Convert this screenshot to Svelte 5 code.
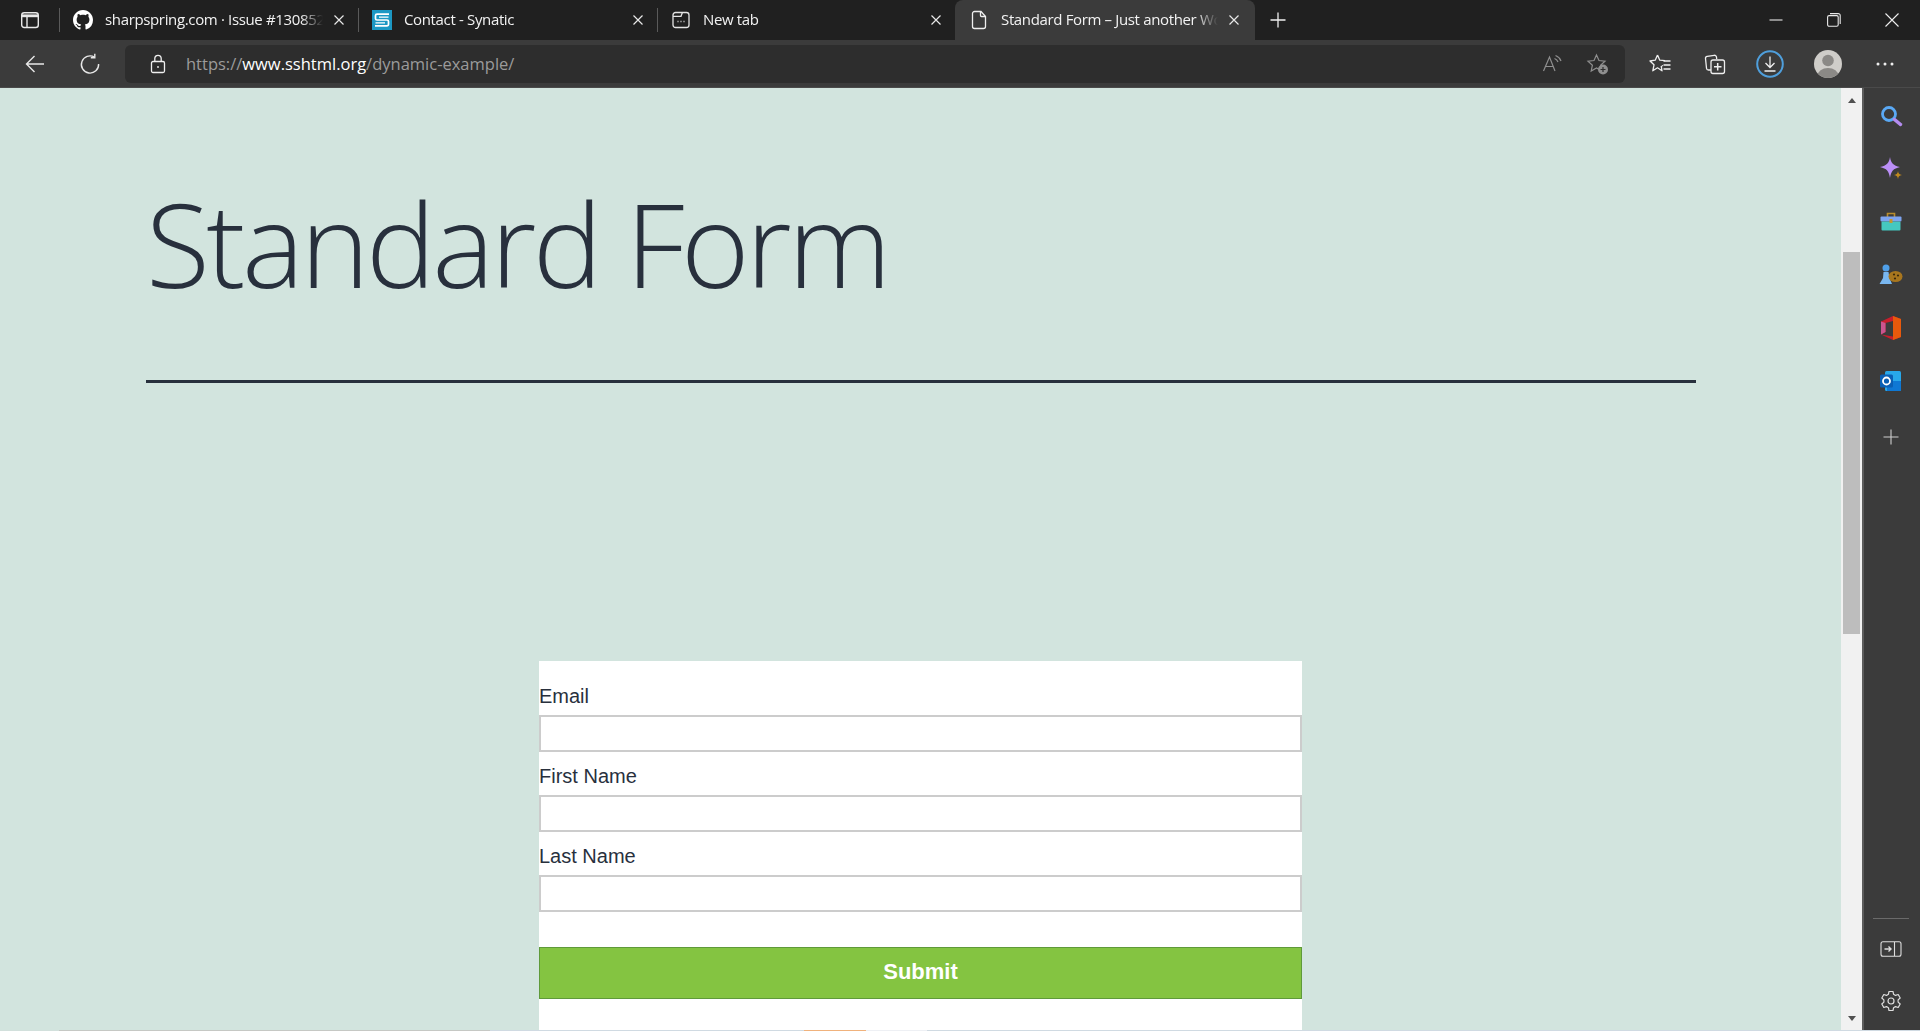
<script>
	const tabs = [
		{ title: 'sharpspring.com · Issue #130852', icon: 'github', width: 299 },
		{ title: 'Contact - Synatic', icon: 'synatic', width: 299 },
		{ title: 'New tab', icon: 'newtab', width: 298 }
	];
	const fields = ['Email', 'First Name', 'Last Name'];
	const edgeSegments = [
		{ width: 59, color: '#d2e0dc' },
		{ width: 431, color: '#c6c8c4' },
		{ width: 314, color: '#d0dae2' },
		{ width: 62, color: '#f0b27c' },
		{ width: 61, color: '#eef0f4' },
		{ width: 993, color: '#d0dae2' }
	];
</script>

<div class="browser">
	<header class="tabstrip">
		<button class="tabs-btn" aria-label="Tab actions">
			<svg width="20" height="20" viewBox="0 0 20 20" fill="none" stroke="#e8e8e8" stroke-width="1.4"><rect x="1.700" y="2.700" width="16.600" height="14.800" rx="2.500" /><path d="M2 5.800h16" stroke-width="2.800" /><path d="M7 6v11" /></svg>
		</button>
		{#each tabs as tab}
			<div class="tab" style="width: {tab.width}px">
				<span class="sep"></span>
				<span class="fav">
					{#if tab.icon === 'github'}
						<svg width="20" height="20" viewBox="0 0 16 16" fill="#fff"><path d="M8 0C3.58 0 0 3.58 0 8c0 3.54 2.29 6.53 5.47 7.59.4.07.55-.17.55-.38 0-.19-.01-.82-.01-1.49-2.01.37-2.53-.49-2.69-.94-.09-.23-.48-.94-.82-1.13-.28-.15-.68-.52-.01-.53.63-.01 1.08.58 1.23.82.72 1.21 1.87.87 2.33.66.07-.52.28-.87.51-1.07-1.78-.2-3.64-.89-3.64-3.95 0-.87.31-1.59.82-2.15-.08-.2-.36-1.02.08-2.12 0 0 .67-.21 2.2.82.64-.18 1.32-.27 2-.27s1.36.09 2 .27c1.53-1.04 2.2-.82 2.2-.82.44 1.1.16 1.92.08 2.12.51.56.82 1.27.82 2.15 0 3.07-1.87 3.75-3.65 3.95.29.25.54.73.54 1.48 0 1.07-.01 1.93-.01 2.2 0 .21.15.46.55.38A8.01 8.01 0 0 0 16 8c0-4.42-3.58-8-8-8z" /></svg>
					{:else if tab.icon === 'synatic'}
						<svg width="20" height="20" viewBox="0 0 20 20"><rect width="20" height="20" fill="#1c98c4" /><path d="M17 4.200H5a1.500 1.500 0 0 0-1.500 1.500v2.800A1.500 1.500 0 0 0 5 10h10a1.500 1.500 0 0 1 1.500 1.500v2.800a1.500 1.500 0 0 1-1.500 1.500H3" fill="none" stroke="#fff" stroke-width="1.700" /><path d="M7 7.100h9.500M3.500 12.900H13" fill="none" stroke="#fff" stroke-width="1.400" /></svg>
					{:else}
						<svg width="20" height="20" viewBox="0 0 20 20" fill="none" stroke="#e4e4e4" stroke-width="1.300"><rect x="2" y="2.500" width="16" height="15" rx="2.500" /><path d="M2 6.300h8l1.300-3.600" /><path d="M6.500 11.500h1M9.500 11.500h1M12.500 11.500h1" stroke-width="1.600" /></svg>
					{/if}
				</span>
				<span class="title">{tab.title}</span>
				<svg class="close" width="12" height="12" viewBox="0 0 12 12" stroke="#e8e8e8" stroke-width="1.200"><path d="M1.500 1.500l9 9M10.500 1.500l-9 9" /></svg>
			</div>
		{/each}
		<div class="tab active">
			<span class="fav">
				<svg width="20" height="20" viewBox="0 0 20 20" fill="none" stroke="#efefef" stroke-width="1.300"><path d="M3.500 3.500a2 2 0 0 1 2-2h6.500l4.500 5v10a2 2 0 0 1-2 2h-9a2 2 0 0 1-2-2z" /><path d="M11.500 1.500v4a1 1 0 0 0 1 1h4" /></svg>
			</span>
			<span class="title">Standard Form – Just another WordPress</span>
			<svg class="close" width="12" height="12" viewBox="0 0 12 12" stroke="#e8e8e8" stroke-width="1.200"><path d="M1.500 1.500l9 9M10.500 1.500l-9 9" /></svg>
		</div>
		<button class="new-tab" aria-label="New tab">
			<svg width="18" height="18" viewBox="0 0 18 18" stroke="#efefef" stroke-width="1.300"><path d="M9 1.500v15M1.500 9h15" /></svg>
		</button>
		<div class="win-controls">
			<svg width="14" height="14" viewBox="0 0 14 14" stroke="#e8e8e8" stroke-width="1.100"><path d="M.5 7h13" /></svg>
			<svg width="14" height="14" viewBox="0 0 14 14" fill="none" stroke="#e8e8e8" stroke-width="1.100"><rect x=".6" y="2.600" width="10.600" height="10.600" rx="1.500" /><path d="M3 .6h8.200a2 2 0 0 1 2 2V11" /></svg>
			<svg width="14" height="14" viewBox="0 0 14 14" stroke="#efefef" stroke-width="1.100"><path d="M.5.5l13 13M13.500.5l-13 13" /></svg>
		</div>
	</header>

	<nav class="toolbar">
		<svg class="back" width="22" height="22" viewBox="0 0 22 22" fill="none" stroke="#e8e8e8" stroke-width="1.400"><path d="M20 11H2.500M10.500 3l-8 8 8 8" /></svg>
		<svg class="reload" width="22" height="22" viewBox="0 0 22 22" fill="none" stroke="#e8e8e8" stroke-width="1.400"><path d="M15.500 4.200A8.600 8.600 0 1 0 19.600 11" /><path d="M15.800 .8v4h-4" /></svg>
		<div class="omnibox">
			<svg class="lock" width="16" height="20" viewBox="0 0 16 20" fill="none" stroke="#efefef" stroke-width="1.300"><rect x="1.500" y="7.500" width="13" height="11" rx="1.500" /><path d="M4.800 7.500V4.500a3.200 3.200 0 0 1 6.400 0v3" /><circle cx="8" cy="13" r=".9" fill="#efefef" stroke="none" /></svg>
			<span class="url">https://<b>www.sshtml.org</b>/dynamic-example/</span>
			<svg class="read" width="22" height="20" viewBox="0 0 22 20" fill="none" stroke="#8f8f8f" stroke-width="1.200"><path d="M1.500 17L7.500 3l5.500 14M3.500 12.500h8" /><path d="M12.500 4.500a6 6 0 0 1 3.500 3.500M13.500 1.500a9 9 0 0 1 5.500 5.500" /></svg>
			<svg class="fav-add" width="24" height="24" viewBox="0 0 24 24" fill="none" stroke="#8f8f8f" stroke-width="1.200"><path d="M10.500 3l2.500 5.500 6 .7-4.400 4 1.200 5.800-5.300-3-5.300 3 1.200-5.800-4.400-4 6-.7z" /><circle cx="17" cy="17.500" r="5" fill="#8f8f8f" stroke="none" /><path d="M17 15v5M14.500 17.500h5" stroke="#2f2f2f" /></svg>
		</div>
		<div class="tools">
			<svg width="22" height="22" viewBox="0 0 22 22" fill="none" stroke="#efefef" stroke-width="1.300"><path d="M8.500 2l2.300 5.200 5.200.5M13 12.500l1 .5M8.500 2L6.200 7.200 1 8l4 3.800-1.200 6 4.700-3 4.500 3-.8-5" stroke-linejoin="round" /><path d="M14.500 8h7M14.500 12h7M14.500 16h7" /></svg>
			<svg class="collections" width="24" height="24" viewBox="0 0 24 24" fill="none" stroke="#efefef" stroke-width="1.300"><path d="M8 18H5.500a2 2 0 0 1-2-1.800L2.500 6.500a2 2 0 0 1 1.700-2.200l7-1a2 2 0 0 1 2.300 1.700l.2 2" /><rect x="8" y="8" width="13.500" height="13.500" rx="2" /><path d="M14.700 11v7.500M11 14.700h7.500" stroke-width="1.500" /></svg>
			<svg class="download" width="28" height="28" viewBox="0 0 28 28" fill="none"><circle cx="14" cy="14" r="12.800" stroke="#4f9fdc" stroke-width="2" /><path d="M14 6.500v11M9.500 13l4.500 4.500 4.500-4.500M8.500 21h11" stroke="#efefef" stroke-width="1.300" /></svg>
			<svg width="28" height="28" viewBox="0 0 28 28"><defs><clipPath id="avatar"><circle cx="14" cy="14" r="14" /></clipPath></defs><circle cx="14" cy="14" r="14" fill="#cfcdc9" /><g clip-path="url(#avatar)" fill="#8b8986"><circle cx="14" cy="10.500" r="5.800" /><ellipse cx="14" cy="26" rx="10.500" ry="8" /></g></svg>
			<svg class="more" width="18" height="6" viewBox="0 0 18 6" fill="#efefef"><circle cx="2" cy="3" r="1.500" /><circle cx="9" cy="3" r="1.500" /><circle cx="16" cy="3" r="1.500" /></svg>
		</div>
	</nav>

	<div class="viewport">
		<main class="page">
			<h1>Standard Form</h1>
			<hr />
			<form class="form">
				{#each fields as field}
					<label class="field">
						<span>{field}</span>
						<input type="text" />
					</label>
				{/each}
				<button type="button" class="submit">Submit</button>
			</form>
		</main>

		<div class="scrollbar">
			<span class="arrow up"></span>
			<span class="track"><span class="thumb"></span></span>
			<span class="arrow down"></span>
		</div>

		<aside class="sidebar">
			<svg width="24" height="24" viewBox="0 0 24 24" fill="none"><circle cx="10" cy="10" r="6.500" stroke="#5aa9f5" stroke-width="2.800" /><path d="M15.500 15.500l6 5" stroke="#b48cf0" stroke-width="3.500" stroke-linecap="round" /></svg>
			<svg width="24" height="24" viewBox="0 0 24 24"><path d="M11 0c1 6.200 3.200 8.600 10 10-6.800 1.500-9 4.300-10 11-1-6.700-3.200-9.500-10-11C7.800 8.600 10 6.200 11 0z" fill="#bb8ff7" /><path d="M19 14c.3 2.500 1.200 3.400 4 4-2.800.6-3.700 1.600-4 4.200-.3-2.600-1.200-3.600-4-4.200 2.800-.6 3.700-1.500 4-4z" fill="#c08a1e" /></svg>
			<svg width="24" height="24" viewBox="0 0 24 24"><path d="M8.500 7V3.500h7V7" fill="none" stroke="#b98d2c" stroke-width="1.600" /><rect x="1.500" y="6.500" width="21" height="5" rx="1" fill="#7ea4f0" /><rect x="2.500" y="11.500" width="19" height="9" rx="1" fill="#45c8c0" /><rect x="10.500" y="9" width="3" height="4" fill="#c9962c" /></svg>
			<svg width="24" height="24" viewBox="0 0 24 24"><circle cx="7" cy="5" r="3.500" fill="#4f9fe8" /><path d="M4.500 9h5l1 6 2.500 6H.5L4 15z" fill="#79b7f0" /><ellipse cx="16.500" cy="13.500" rx="7" ry="5.500" fill="#a8761e" /><circle cx="15" cy="11.500" r="1.100" fill="#3c2a0c" /><circle cx="19" cy="12.500" r="1.100" fill="#3c2a0c" /><circle cx="16" cy="15.500" r="1.100" fill="#3c2a0c" /></svg>
			<svg width="24" height="24" viewBox="0 0 24 24"><path d="M2 5.500L14 0l8 3v18l-8 3L2 18.500l12 2V5L6.500 7v9L2 18.500z" fill="#c81e2c" /><path d="M2 5.500L6.500 7v9L2 18.500z" fill="#c9558f" /><path d="M14 0l8 3v18l-8 3z" fill="#e8590c" /></svg>
			<svg width="24" height="24" viewBox="0 0 24 24"><rect x="6" y="2" width="16" height="20" rx="1.500" fill="#28a8ea" /><path d="M8 12l14 0v9a1 1 0 0 1-1 1H8z" fill="#0f78d4" /><rect x="1" y="5.500" width="13" height="13" rx="1.500" fill="#0a5fb4" /><circle cx="7.500" cy="12" r="3.500" fill="none" stroke="#fff" stroke-width="1.800" /></svg>
			<svg class="plus" width="16" height="16" viewBox="0 0 16 16" stroke="#cfcfcf" stroke-width="1.100"><path d="M8 .5v15M.5 8h15" /></svg>
			<span class="side-rule"></span>
			<svg class="panel" width="22" height="16" viewBox="0 0 22 16" fill="none" stroke="#dedede" stroke-width="1.100"><rect x="1" y=".8" width="20" height="14.400" rx="2" /><path d="M14.500 1v14" /><path d="M4.500 8h6.500M8.500 5.500L11 8l-2.500 2.500" stroke-width="1.400" /></svg>
			<svg class="gear" width="22" height="22" viewBox="0 0 22 22" fill="none" stroke="#dedede" stroke-width="1.200"><circle cx="11" cy="11" r="3" /><path d="M9 1.500h4l.6 2.800 1.900 1.100 2.700-.9 2 3.500-2.100 1.900v2.200l2.100 1.900-2 3.500-2.700-.9-1.900 1.100-.6 2.800H9l-.6-2.800-1.900-1.100-2.700.9-2-3.500 2.100-1.900V9.900L1.800 8l2-3.500 2.700.9 1.900-1.100z" stroke-linejoin="round" /></svg>
		</aside>
	</div>

	<div class="screen-edge">
		{#each edgeSegments as segment}
			<span style="width: {segment.width}px; background: {segment.color}"></span>
		{/each}
		<span class="edge-rest"></span>
	</div>
</div>

<style>
	:global(body) {
		margin: 0;
		overflow: hidden;
	}

	.browser {
		display: flex;
		flex-direction: column;
		height: 1031px;
		overflow: hidden;
		background: #3b3b3b;
		font-family: "Open Sans", "Liberation Sans", sans-serif;
	}

	.tabstrip {
		display: flex;
		align-items: stretch;
		height: 40px;
		flex: none;
		background: #202020;
		color: #f2f2f2;
		font-size: 15px;
	}

	.tabs-btn {
		width: 59px;
		flex: none;
		padding: 0 0 0 20px;
		border: 0;
		background: none;
		text-align: left;
	}

	.tabs-btn svg {
		display: block;
	}

	.tab {
		display: flex;
		align-items: center;
		flex: none;
		box-sizing: border-box;
		padding-right: 13px;
	}

	.sep {
		width: 1px;
		height: 24px;
		margin-right: 13px;
		background: #5a5a5a;
	}

	.fav {
		display: flex;
		flex: none;
		margin-right: 12px;
	}

	.title {
		flex: 1;
		min-width: 0;
		overflow: hidden;
		white-space: nowrap;
		letter-spacing: -0.35px;
		margin-bottom: 2px;
		-webkit-mask-image: linear-gradient(to left, transparent 0, #000 22px);
		mask-image: linear-gradient(to left, transparent 0, #000 22px);
	}

	.close {
		flex: none;
		margin-left: 10px;
	}

	.tab.active {
		width: 300px;
		height: 45px;
		padding: 0 15px 5px 14px;
		border-radius: 8px 8px 0 0;
		background: #3b3b3b;
	}

	.new-tab {
		width: 46px;
		flex: none;
		border: 0;
		background: none;
		padding: 0;
	}

	.new-tab svg {
		display: block;
		margin: 0 auto;
	}

	.win-controls {
		display: flex;
		align-items: center;
		gap: 44px;
		margin-left: auto;
		padding-right: 21px;
	}

	.toolbar {
		display: flex;
		align-items: center;
		height: 48px;
		flex: none;
		box-sizing: border-box;
		padding: 0 0 0 24px;
		background: #3b3b3b;
		border-bottom: 1px solid #4a4a4a;
	}

	.reload {
		margin-left: 33px;
	}

	.omnibox {
		display: flex;
		align-items: center;
		width: 1500px;
		height: 38px;
		flex: none;
		box-sizing: border-box;
		margin-left: 24px;
		padding: 0 15px 0 25px;
		border-radius: 6px;
		background: #2d2d2d;
		color: #9b9b9b;
		font-size: 16.5px;
	}

	.url {
		margin-left: 20px;
	}

	.url b {
		font-weight: 400;
		color: #fff;
	}

	.read {
		margin-left: auto;
	}

	.fav-add {
		margin-left: 22px;
	}

	.tools {
		display: flex;
		align-items: center;
		gap: 30px;
		margin-left: 24px;
	}

	.collections {
		margin-left: 2px;
	}

	.download {
		margin-left: -1px;
	}

	.more {
		margin-left: 4px;
	}

	.viewport {
		display: flex;
		flex: 1;
		min-height: 0;
	}

	.page {
		flex: 1;
		min-width: 0;
		box-sizing: border-box;
		padding: 0 145px 0 146px;
		background: #d2e4de;
		color: #28303d;
	}

	h1 {
		margin: 75px 0 0;
		font-size: 117px;
		font-weight: 300;
		line-height: 160px;
		letter-spacing: -3.500px;
		color: #28303d;
	}

	hr {
		height: 3px;
		margin: 57px 0 0;
		border: 0;
		background: #28303d;
	}

	.form {
		display: flex;
		flex-direction: column;
		width: 763px;
		height: 369px;
		box-sizing: border-box;
		margin: 278px 0 0 393px;
		padding-top: 23px;
		background: #fff;
		font-family: "Liberation Sans", Arial, sans-serif;
	}

	.field {
		display: block;
		font-size: 20px;
		line-height: 24px;
		margin-bottom: 12.500px;
	}

	.field span {
		display: block;
		margin-bottom: 7px;
	}

	input {
		display: block;
		width: 100%;
		height: 36.500px;
		box-sizing: border-box;
		border: 2px solid #ccc;
		background: #fff;
		padding: 0;
	}

	.submit {
		width: 100%;
		height: 52px;
		margin-top: 23px;
		border: 1px solid #5f9a3a;
		background: #84c441;
		color: #fff;
		font: bold 22px "Liberation Sans", Arial, sans-serif;
		padding: 0 0 2px;
	}

	.scrollbar {
		display: flex;
		flex-direction: column;
		align-items: center;
		width: 21px;
		flex: none;
		background: #f1f1f1;
	}

	.arrow {
		width: 0;
		height: 0;
		flex: none;
		border-left: 4.500px solid transparent;
		border-right: 4.500px solid transparent;
	}

	.arrow.up {
		margin: 10px 0 7px;
		border-bottom: 5px solid #505050;
	}

	.arrow.down {
		margin: 7px 0 9px;
		border-top: 5px solid #505050;
	}

	.track {
		flex: 1;
		width: 100%;
	}

	.thumb {
		display: block;
		height: 382px;
		margin: 142px 2px 0;
		background: #bdbdbd;
	}

	.sidebar {
		display: flex;
		flex-direction: column;
		align-items: center;
		width: 58px;
		flex: none;
		box-sizing: border-box;
		gap: 29px;
		padding: 16px 2px 0 0;
		background: #3b3b3b;
		border-left: 2px solid #5c5c5c;
	}

	.plus {
		margin-top: 7px;
	}

	.side-rule {
		width: 36px;
		height: 1px;
		margin-top: auto;
		margin-bottom: -7px;
		background: #6a6a6a;
	}

	.gear {
		margin-top: 4px;
		margin-bottom: 18px;
	}

	.screen-edge {
		display: flex;
		height: 1px;
		flex: none;
	}

	.edge-rest {
		flex: 1;
		background: #d0dae2;
	}
</style>
